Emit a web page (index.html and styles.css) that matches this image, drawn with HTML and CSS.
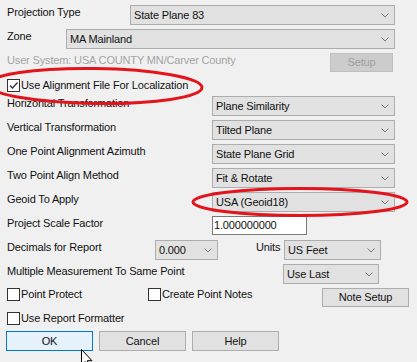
FILE: index.html
```html
<!DOCTYPE html>
<html>
<head>
<meta charset="utf-8">
<link rel="stylesheet" href="styles.css">
</head>
<body>
<div class="dlg">
  <div class="row">
    <span class="lbl w-proj">Projection Type</span>
    <div class="combo cw-proj"><span>State Plane 83</span><svg class="chev" width="8" height="5" viewBox="0 0 8 5"><path d="M0.5 0.5 L4 4 L7.5 0.5"/></svg></div>
  </div>
  <div class="row">
    <span class="lbl w-zone">Zone</span>
    <div class="combo cw-zone"><span>MA Mainland</span><svg class="chev" width="8" height="5" viewBox="0 0 8 5"><path d="M0.5 0.5 L4 4 L7.5 0.5"/></svg></div>
  </div>
  <div class="row row-user">
    <span class="lbl w-user disabled">User System: USA COUNTY MN/Carver County</span>
    <div class="btn btn-setup">Setup</div>
  </div>
  <div class="row row-check">
    <label class="chk"><span class="box"><svg width="11" height="11" viewBox="0 0 11 11"><path d="M2 5.5 L4.5 8 L9.5 2.5"/></svg></span><span>Use Alignment File For Localization</span></label>
  </div>
  <div class="row">
    <span class="lbl w-main">Horizontal Transformation</span>
    <div class="combo cw-main"><span>Plane Similarity</span><svg class="chev" width="8" height="5" viewBox="0 0 8 5"><path d="M0.5 0.5 L4 4 L7.5 0.5"/></svg></div>
  </div>
  <div class="row">
    <span class="lbl w-main">Vertical Transformation</span>
    <div class="combo cw-main"><span>Tilted Plane</span><svg class="chev" width="8" height="5" viewBox="0 0 8 5"><path d="M0.5 0.5 L4 4 L7.5 0.5"/></svg></div>
  </div>
  <div class="row">
    <span class="lbl w-main">One Point Alignment Azimuth</span>
    <div class="combo cw-main"><span>State Plane Grid</span><svg class="chev" width="8" height="5" viewBox="0 0 8 5"><path d="M0.5 0.5 L4 4 L7.5 0.5"/></svg></div>
  </div>
  <div class="row">
    <span class="lbl w-main">Two Point Align Method</span>
    <div class="combo cw-main"><span>Fit &amp; Rotate</span><svg class="chev" width="8" height="5" viewBox="0 0 8 5"><path d="M0.5 0.5 L4 4 L7.5 0.5"/></svg></div>
  </div>
  <div class="row">
    <span class="lbl w-main">Geoid To Apply</span>
    <div class="combo cw-main"><span>USA (Geoid18)</span><svg class="chev" width="8" height="5" viewBox="0 0 8 5"><path d="M0.5 0.5 L4 4 L7.5 0.5"/></svg></div>
  </div>
  <div class="row">
    <span class="lbl w-main">Project Scale Factor</span>
    <div class="textbox">1.000000000</div>
  </div>
  <div class="row">
    <span class="lbl w-dec">Decimals for Report</span>
    <div class="combo cw-dec"><span>0.000</span><svg class="chev" width="8" height="5" viewBox="0 0 8 5"><path d="M0.5 0.5 L4 4 L7.5 0.5"/></svg></div>
    <span class="lbl w-units">Units</span>
    <div class="combo cw-units"><span>US Feet</span><svg class="chev" width="8" height="5" viewBox="0 0 8 5"><path d="M0.5 0.5 L4 4 L7.5 0.5"/></svg></div>
  </div>
  <div class="row">
    <span class="lbl w-mult">Multiple Measurement To Same Point</span>
    <div class="combo cw-mult"><span>Use Last</span><svg class="chev" width="8" height="5" viewBox="0 0 8 5"><path d="M0.5 0.5 L4 4 L7.5 0.5"/></svg></div>
  </div>
  <div class="row">
    <label class="chk w-pp"><span class="box"></span><span>Point Protect</span></label>
    <label class="chk w-cpn"><span class="box"></span><span>Create Point Notes</span></label>
    <div class="btn btn-note">Note Setup</div>
  </div>
  <div class="row row-check2">
    <label class="chk"><span class="box"></span><span>Use Report Formatter</span></label>
  </div>
  <div class="row btnrow">
    <div class="btn btn-dlg btn-ok">OK</div>
    <div class="btn btn-dlg">Cancel</div>
    <div class="btn btn-dlg">Help</div>
  </div>
</div>
<svg class="marks" width="417" height="362" viewBox="0 0 417 362">
  <ellipse cx="95" cy="86" rx="107" ry="17.5" transform="rotate(0.8 95 86)"/>
  <ellipse cx="300" cy="202" rx="107" ry="13.5"/>
</svg>
<svg class="cursor" width="14" height="22" viewBox="0 0 14 22"><path d="M1.5 1.5 L1.5 17 L5 13.5 L7.6 19.6 L9.8 18.6 L7.3 12.7 L12 12.7 Z"/></svg>
</body>
</html>
```
FILE: styles.css
```css
html, body {
  margin: 0;
  padding: 0;
  background: #f0f0f0;
}
body {
  width: 417px;
  height: 362px;
  overflow: hidden;
  position: relative;
  font-family: "Liberation Sans", Arial, sans-serif;
  font-size: 11px;
  letter-spacing: -0.15px;
  color: #111;
}
.dlg {
  padding: 5px 0 0 7px;
}
.row {
  display: flex;
  align-items: flex-start;
  height: 20px;
  margin-bottom: 4px;
}
.lbl {
  flex: none;
  padding-top: 1px;
  line-height: 13px;
  white-space: nowrap;
}
.w-proj { width: 123px; }
.w-zone { width: 59px; }
.w-user { width: 323px; }
.w-main { width: 205px; }
.w-dec { width: 148px; }
.w-units { width: 28px; margin-left: 38px; }
.w-mult { width: 276px; }
.disabled { color: #a3a3a3; }

.combo {
  flex: none;
  box-sizing: border-box;
  height: 20px;
  background: #e1e1e1;
  border: 1px solid #adadad;
  display: flex;
  align-items: center;
  justify-content: space-between;
  padding: 0 5px 0 3px;
  line-height: 18px;
  white-space: nowrap;
}
.cw-proj { width: 265px; }
.cw-zone { width: 329px; }
.cw-main { width: 183px; }
.cw-dec { width: 63px; }
.cw-units { width: 97px; }
.cw-mult { width: 96px; }
.chev {
  flex: none;
}
.chev path {
  fill: none;
  stroke: #7a7a7a;
  stroke-width: 1;
}
.textbox {
  box-sizing: border-box;
  width: 95px;
  height: 19px;
  background: #fff;
  border: 1px solid #7a7a7a;
  padding-left: 1px;
  line-height: 17px;
}

.row-user {
  height: 19px;
  margin-top: 1px;
  margin-bottom: 7px;
}
.btn {
  box-sizing: border-box;
  flex: none;
  height: 19px;
  border: 1px solid #adadad;
  background: #e1e1e1;
  text-align: center;
  line-height: 17px;
}
.btn-setup {
  width: 63px;
  background: #cccccc;
  border-color: #bfbfbf;
  color: #a0a0a0;
}
.btn-note {
  width: 87px;
}

.row-check {
  height: 13px;
  margin-bottom: 4px;
}
.row-check2 {
  height: 13px;
  margin-top: 1px;
  margin-bottom: 6px;
}
.chk {
  display: flex;
  align-items: center;
  flex: none;
  line-height: 13px;
  white-space: nowrap;
}
.box {
  box-sizing: border-box;
  width: 13px;
  height: 13px;
  border: 1px solid #333;
  background: #fff;
  margin-right: 1px;
  display: flex;
  align-items: center;
  justify-content: center;
}
.box path {
  fill: none;
  stroke: #333;
  stroke-width: 1.3;
}
.w-pp { width: 141px; }
.w-cpn { width: 174px; }

.btnrow {
  margin-left: -1px;
  gap: 6px;
}
.btn-dlg {
  width: 87px;
  height: 20px;
  line-height: 18px;
}
.btn-ok {
  background: #e5f1fb;
  border-color: #0078d7;
}

.marks {
  position: absolute;
  left: 0;
  top: 0;
  pointer-events: none;
}
.marks ellipse {
  fill: none;
  stroke: #e3141c;
  stroke-width: 3;
}
.cursor {
  position: absolute;
  left: 80px;
  top: 348px;
}
.cursor path {
  fill: #fff;
  stroke: #000;
  stroke-width: 1;
  stroke-linejoin: miter;
}
```
